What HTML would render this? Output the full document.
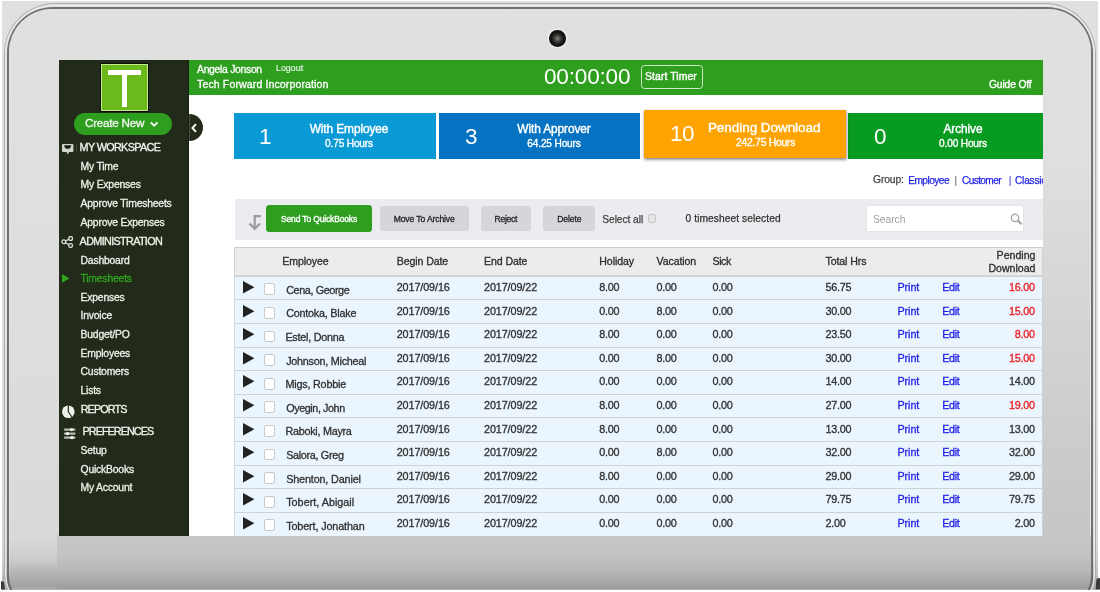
<!DOCTYPE html>
<html><head><meta charset="utf-8"><title>Timesheets</title><style>
html,body{margin:0;padding:0;}
body{width:1100px;height:592px;position:relative;overflow:hidden;background:#fff;font-family:"Liberation Sans", sans-serif;}
#wrap{position:absolute;left:0;top:0;width:1100px;height:592px;will-change:transform;}
.t{position:absolute;white-space:nowrap;line-height:1;font-family:"Liberation Sans", sans-serif;}
</style></head><body><div id="wrap">
<div style='position:absolute;left:2px;top:1px;width:1096.00px;height:589.00px;background:linear-gradient(#e0e0e0 0px,#dedede 300px,#d9d9d9 540px,#cfcfcf 560px,#b8b8b8 582px,#acacac 587px,#c4c4c4 589px)'></div>
<div style='position:absolute;left:1043px;top:60px;width:47.70px;height:475.00px;background:linear-gradient(rgba(198,198,198,0) 0px,rgba(198,198,198,0) 100px,rgba(200,200,200,0.55) 300px,rgba(198,198,198,1) 475px)'></div>
<div style='position:absolute;left:1097.6px;top:498px;width:2.40px;height:82.00px;background:#fff'></div>
<div style='position:absolute;left:3.6px;top:2.8px;width:1092.8px;height:574px;border:1.8px solid #acacac;border-radius:51px 51px 0 0;box-sizing:border-box;border-bottom:none'></div>
<div style='position:absolute;left:5.4px;top:4.6px;width:1089.2px;height:571px;border:1.6px solid #ececec;border-radius:49px 49px 0 0;box-sizing:border-box;border-bottom:none'></div>
<div style='position:absolute;left:6.6px;top:6.6px;width:1086.8px;height:569.5px;border:2.7px solid #727272;border-radius:46px 46px 0 0;box-sizing:border-box;border-bottom:none'></div>
<div style='position:absolute;left:9.3px;top:9.3px;width:1081.4px;height:566.7px;border:1.2px solid #e2e2e2;border-radius:43px 43px 0 0;box-sizing:border-box;border-bottom:none'></div>
<div style='position:absolute;left:57px;top:535px;width:1033.70px;height:55.00px;background:linear-gradient(#c6c6c6 0px,#c3c3c3 20px,#b7b7b7 36px,#a6a6a6 48px,#9c9c9c 53px,#b4b4b4 55px)'></div>
<div style='position:absolute;left:8.6px;top:535px;width:48.40px;height:55.00px;background:linear-gradient(rgba(215,215,215,0) 0px,rgba(200,200,200,0.5) 25px,rgba(160,160,160,0.95) 52px,rgba(180,180,180,0.9) 55px)'></div>
<svg style='position:absolute;left:0;top:570px' width='30' height='22' viewBox='0 0 30 22'><path d='M3.8 6.5 C3.8 13 5 17 7 20' stroke='#b3b3b3' stroke-width='2.2' fill='none'/><path d='M6.1 6 C6.1 12 7.2 16 9.2 20' stroke='#e4e4e4' stroke-width='1.4' fill='none'/><path d='M7.95 5.5 C7.95 12 9 16.5 11.5 20' stroke='#6a6a6a' stroke-width='2.2' fill='none'/><path d='M1 11 L4 12 L5 19.6 L1 19.6Z' fill='#3a3a3a'/></svg>
<svg style='position:absolute;left:1070px;top:570px' width='30' height='22' viewBox='0 0 30 22'><path d='M26.2 6.5 C26.2 13 25 17 23 20' stroke='#b3b3b3' stroke-width='2.2' fill='none'/><path d='M23.9 6 C23.9 12 22.8 16 20.8 20' stroke='#e4e4e4' stroke-width='1.4' fill='none'/><path d='M22.05 5.5 C22.05 12 21 16.5 18.5 20' stroke='#6a6a6a' stroke-width='2.2' fill='none'/><path d='M29 8 L26.5 9 L25.5 19.6 L30 19.6 L30 8Z' fill='#3a3a3a'/></svg>
<div style='position:absolute;left:0px;top:589.5px;width:1100.00px;height:2.50px;background:#fff'></div>
<div style='position:absolute;left:549.3px;top:30.4px;width:16.4px;height:16.4px;border-radius:50%;background:radial-gradient(circle at 50% 50%,#85857c 0%,#3c3c38 28%,#141414 52%,#0e0e0e 100%);box-shadow:0 0 0 1.5px #f0f0f0'></div>
<div style='position:absolute;left:59px;top:60px;width:984.00px;height:475.50px;background:#fff'></div>
<div style='position:absolute;left:59px;top:60px;width:130.00px;height:475.50px;background:#222a19'></div>
<div style='position:absolute;left:187.8px;top:60px;width:1.20px;height:475.50px;background:#171d10'></div>
<div style='position:absolute;left:189px;top:60px;width:854.00px;height:35.00px;background:#2e9e1f'></div>
<div class=t style='left:197px;top:65.16px;font-size:10.4px;color:#ffffff;letter-spacing:-0.3px;-webkit-text-stroke:0.3px #ffffff;'>Angela Jonson</div>
<div class=t style='left:276px;top:63.64px;font-size:8.9px;color:#ffffff;-webkit-text-stroke:0.15px #ffffff;opacity:.9;'>Logout</div>
<div class=t style='left:197px;top:78.69px;font-size:10.6px;color:#ffffff;letter-spacing:0.1px;-webkit-text-stroke:0.3px #ffffff;'>Tech Forward Incorporation</div>
<div class=t style='left:544px;top:65.79px;font-size:22.6px;color:#ffffff;letter-spacing:-0.2px;'>00:00:00</div>
<div style='position:absolute;left:640.5px;top:64.6px;width:62.2px;height:24.4px;border:1px solid #cfe9c8;border-radius:3.5px;box-sizing:border-box'></div>
<div class=t style='left:645px;top:72.16px;font-size:10.4px;color:#ffffff;letter-spacing:0.1px;-webkit-text-stroke:0.4px #ffffff;'>Start Timer</div>
<div class=t style='left:989px;top:80.05px;font-size:10.3px;color:#ffffff;letter-spacing:-0.15px;-webkit-text-stroke:0.35px #ffffff;'>Guide Off</div>
<div style='position:absolute;left:234px;top:113px;width:202.00px;height:46.00px;background:#0a9ad6'></div>
<div class=t style='left:259px;top:126.07px;font-size:22.5px;color:#ffffff;'>1</div>
<div class=t style='left:49px;width:600px;text-align:center;top:123.58px;font-size:11.9px;color:#ffffff;letter-spacing:-0.1px;-webkit-text-stroke:0.4px #ffffff;'>With Employee</div>
<div class=t style='left:49px;width:600px;text-align:center;top:139.01px;font-size:10.1px;color:#ffffff;letter-spacing:-0.15px;-webkit-text-stroke:0.35px #ffffff;'>0.75 Hours</div>
<div style='position:absolute;left:439px;top:113px;width:201.00px;height:46.00px;background:#0573c2'></div>
<div class=t style='left:465px;top:126.07px;font-size:22.5px;color:#ffffff;'>3</div>
<div class=t style='left:254px;width:600px;text-align:center;top:123.58px;font-size:11.9px;color:#ffffff;letter-spacing:-0.1px;-webkit-text-stroke:0.4px #ffffff;'>With Approver</div>
<div class=t style='left:254px;width:600px;text-align:center;top:139.01px;font-size:10.1px;color:#ffffff;letter-spacing:-0.15px;-webkit-text-stroke:0.35px #ffffff;'>64.25 Hours</div>
<div style='position:absolute;left:848px;top:113px;width:195.00px;height:46.00px;background:#079b22'></div>
<div class=t style='left:874px;top:126.07px;font-size:22.5px;color:#ffffff;'>0</div>
<div class=t style='left:663px;width:600px;text-align:center;top:123.58px;font-size:11.9px;color:#ffffff;letter-spacing:-0.1px;-webkit-text-stroke:0.4px #ffffff;'>Archive</div>
<div class=t style='left:663px;width:600px;text-align:center;top:139.01px;font-size:10.1px;color:#ffffff;letter-spacing:-0.15px;-webkit-text-stroke:0.35px #ffffff;'>0.00 Hours</div>
<div style='position:absolute;left:643.5px;top:110px;width:202.50px;height:48.30px;background:#ffa300;box-shadow:0 1px 3px 0.5px rgba(0,0,0,0.55)'></div>
<div class=t style='left:670px;top:122.68px;font-size:22.5px;color:#ffffff;letter-spacing:-0.6px;'>10</div>
<div class=t style='left:464.20000000000005px;width:600px;text-align:center;top:121.43px;font-size:13.5px;color:#ffffff;letter-spacing:-0.05px;-webkit-text-stroke:0.4px #ffffff;'>Pending Download</div>
<div class=t style='left:465.6px;width:600px;text-align:center;top:138.46px;font-size:10.4px;color:#ffffff;letter-spacing:-0.25px;-webkit-text-stroke:0.35px #ffffff;'>242.75 Hours</div>
<div style='position:absolute;left:99.6px;top:62.6px;width:49.10px;height:49.10px;background:#0b0c06'></div>
<div style='position:absolute;left:100.6px;top:63.6px;width:47.10px;height:47.10px;background:#c2ea8e'></div>
<div style='position:absolute;left:101.6px;top:64.6px;width:45.10px;height:45.10px;background:#6cb91b'></div>
<div style='position:absolute;left:108.2px;top:70.4px;width:33.20px;height:4.30px;background:#fff'></div>
<div style='position:absolute;left:121.5px;top:70.4px;width:5.70px;height:36.20px;background:#fff'></div>
<div style='position:absolute;left:73.75px;top:112.5px;width:98.25px;height:22.5px;border-radius:11.25px;background:#2e9e1f'></div>
<div class=t style='left:85px;top:117.06px;font-size:11.7px;color:#f4f8f2;letter-spacing:-0.25px;-webkit-text-stroke:0.3px #f4f8f2;'>Create New</div>
<svg style='position:absolute;left:149px;top:120px' width='11' height='9' viewBox='0 0 11 9'><path d='M1.8 2.3 L5.2 5.7 L8.6 2.3' stroke='#f4f8f2' stroke-width='1.9' fill='none'/></svg>
<div style='position:absolute;left:189px;top:114.3px;width:13.5px;height:27px;border-radius:0 13.5px 13.5px 0;background:#222a19'></div>
<div style='position:absolute;left:188.6px;top:114.3px;width:1.00px;height:27.00px;background:#4d5246'></div>
<svg style='position:absolute;left:190px;top:122px' width='9' height='12' viewBox='0 0 9 12'><path d='M6 2.2 L2.4 6 L6 9.8' stroke='#fff' stroke-width='1.9' fill='none'/></svg>
<div class=t style='left:79.6px;top:142.32px;font-size:10.8px;color:#eef0ea;letter-spacing:-0.65px;-webkit-text-stroke:0.35px #eef0ea;'>MY WORKSPACE</div>
<div class=t style='left:80.5px;top:161.66px;font-size:10.4px;color:#eef0ea;letter-spacing:-0.2px;-webkit-text-stroke:0.3px #eef0ea;'>My Time</div>
<div class=t style='left:80.5px;top:180.46px;font-size:10.4px;color:#eef0ea;letter-spacing:-0.2px;-webkit-text-stroke:0.3px #eef0ea;'>My Expenses</div>
<div class=t style='left:80.5px;top:198.96px;font-size:10.4px;color:#eef0ea;letter-spacing:-0.2px;-webkit-text-stroke:0.3px #eef0ea;'>Approve Timesheets</div>
<div class=t style='left:80.5px;top:217.56px;font-size:10.4px;color:#eef0ea;letter-spacing:-0.2px;-webkit-text-stroke:0.3px #eef0ea;'>Approve Expenses</div>
<div class=t style='left:79.6px;top:235.92px;font-size:10.8px;color:#eef0ea;letter-spacing:-0.65px;-webkit-text-stroke:0.35px #eef0ea;'>ADMINISTRATION</div>
<div class=t style='left:80.5px;top:255.66px;font-size:10.4px;color:#eef0ea;letter-spacing:-0.2px;-webkit-text-stroke:0.3px #eef0ea;'>Dashboard</div>
<div class=t style='left:80.5px;top:274.36px;font-size:10.4px;color:#2fa51f;letter-spacing:-0.2px;-webkit-text-stroke:0.3px #2fa51f;'>Timesheets</div>
<div class=t style='left:80.5px;top:292.56px;font-size:10.4px;color:#eef0ea;letter-spacing:-0.2px;-webkit-text-stroke:0.3px #eef0ea;'>Expenses</div>
<div class=t style='left:80.5px;top:311.16px;font-size:10.4px;color:#eef0ea;letter-spacing:-0.2px;-webkit-text-stroke:0.3px #eef0ea;'>Invoice</div>
<div class=t style='left:80.5px;top:329.96px;font-size:10.4px;color:#eef0ea;letter-spacing:-0.2px;-webkit-text-stroke:0.3px #eef0ea;'>Budget/PO</div>
<div class=t style='left:80.5px;top:348.66px;font-size:10.4px;color:#eef0ea;letter-spacing:-0.2px;-webkit-text-stroke:0.3px #eef0ea;'>Employees</div>
<div class=t style='left:80.5px;top:367.46px;font-size:10.4px;color:#eef0ea;letter-spacing:-0.2px;-webkit-text-stroke:0.3px #eef0ea;'>Customers</div>
<div class=t style='left:80.5px;top:386.16px;font-size:10.4px;color:#eef0ea;letter-spacing:-0.2px;-webkit-text-stroke:0.3px #eef0ea;'>Lists</div>
<div class=t style='left:80.7px;top:403.92px;font-size:10.8px;color:#eef0ea;letter-spacing:-0.87px;-webkit-text-stroke:0.35px #eef0ea;'>REPORTS</div>
<div class=t style='left:82.5px;top:426.02px;font-size:10.8px;color:#eef0ea;letter-spacing:-0.93px;-webkit-text-stroke:0.35px #eef0ea;'>PREFERENCES</div>
<div class=t style='left:80.5px;top:445.96px;font-size:10.4px;color:#eef0ea;letter-spacing:-0.2px;-webkit-text-stroke:0.3px #eef0ea;'>Setup</div>
<div class=t style='left:80.5px;top:464.56px;font-size:10.4px;color:#eef0ea;letter-spacing:-0.2px;-webkit-text-stroke:0.3px #eef0ea;'>QuickBooks</div>
<div class=t style='left:80.5px;top:483.16px;font-size:10.4px;color:#eef0ea;letter-spacing:-0.2px;-webkit-text-stroke:0.3px #eef0ea;'>My Account</div>
<svg style='position:absolute;left:62px;top:273.5px' width='8' height='9' viewBox='0 0 8 9'><path d='M0 0 L7.5 4.4 L0 8.8Z' fill='#2fa51f'/></svg>
<svg style='position:absolute;left:61px;top:143px' width='18' height='12' viewBox='0 0 18 12'><rect x='1' y='1' width='11.4' height='7.9' rx='1' fill='#d2d4ce'/><path d='M3 2.3 H10.4 L9.2 5.2 Q6.7 6.4 4.2 5.2Z' fill='#1a2012'/><rect x='5.9' y='8.8' width='1.8' height='1.9' fill='#d2d4ce'/><rect x='15' y='1.6' width='0.8' height='7.3' fill='#4a5043'/></svg>
<svg style='position:absolute;left:61px;top:236px' width='13' height='12' viewBox='0 0 13 12'><circle cx='2.8' cy='5.8' r='1.9' fill='none' stroke='#dcdfd8' stroke-width='1.3'/><circle cx='9.6' cy='2.4' r='1.9' fill='none' stroke='#dcdfd8' stroke-width='1.3'/><circle cx='9.6' cy='9.5' r='1.9' fill='none' stroke='#dcdfd8' stroke-width='1.3'/><path d='M4.5 4.9 L7.9 3.3 M4.5 6.8 L7.9 8.6' stroke='#dcdfd8' stroke-width='1.2'/></svg>
<svg style='position:absolute;left:62px;top:404.6px' width='13' height='14' viewBox='0 0 13 14'><circle cx='6.3' cy='6.75' r='6.3' fill='#eef0ea'/><path d='M6.3 6.75 L6.3 0.2 M6.3 6.75 L9.9 12' stroke='#222a19' stroke-width='1.2'/></svg>
<svg style='position:absolute;left:62.5px;top:426.5px' width='18' height='13' viewBox='0 0 18 13'><g fill='#b9bcb4'><rect x='0.8' y='1.4' width='11.8' height='2.3' rx='1.1'/><rect x='0.8' y='5.4' width='11.8' height='2.3' rx='1.1'/><rect x='0.8' y='9.4' width='11.8' height='2.3' rx='1.1'/></g><g fill='#f4f4f0'><ellipse cx='8.6' cy='2.55' rx='1.7' ry='1.6'/><ellipse cx='4.5' cy='6.55' rx='1.7' ry='1.6'/><ellipse cx='9' cy='10.55' rx='1.7' ry='1.6'/></g><g fill='#4a5043'><rect x='16' y='2' width='1' height='1'/><rect x='16' y='6' width='1' height='1'/><rect x='16' y='10' width='1' height='1'/></g></svg>
<div class=t style='left:873px;top:175.44px;font-size:10.3px;color:#444;letter-spacing:-0.1px;-webkit-text-stroke:0.25px #444;'>Group:</div>
<div class=t style='left:908.2px;top:175.61px;font-size:10.1px;color:#1f1fe4;letter-spacing:-0.5px;-webkit-text-stroke:0.25px #1f1fe4;'>Employee</div>
<div class=t style='left:954.6px;top:176.05px;font-size:10.3px;color:#555;'>|</div>
<div class=t style='left:962px;top:175.61px;font-size:10.1px;color:#1f1fe4;letter-spacing:-0.6px;-webkit-text-stroke:0.25px #1f1fe4;'>Customer</div>
<div class=t style='left:1008.7px;top:176.05px;font-size:10.3px;color:#1f1fe4;'>|</div>
<div class=t style='left:1015px;top:175.61px;font-size:10.1px;color:#1f1fe4;letter-spacing:-0.2px;-webkit-text-stroke:0.25px #1f1fe4;width:28px;overflow:hidden;'>Classic</div>
<div style='position:absolute;left:234.5px;top:199px;width:808.50px;height:40.50px;background:#ebecef'></div>
<svg style='position:absolute;left:248px;top:213.5px' width='15' height='16' viewBox='0 0 15 16'><path d='M12.8 2.1 H6.7 V14' fill='none' stroke='#9b9b9b' stroke-width='2.2'/><path d='M1.4 9.4 L6.7 14.8 L12 9.4' fill='none' stroke='#9b9b9b' stroke-width='2.2'/></svg>
<div style='position:absolute;left:265.7px;top:204.5px;width:106.2px;height:27.7px;border-radius:3.5px;background:#2e9e1f'></div>
<div class=t style='left:281px;top:214.78px;font-size:8.5px;color:#fff;letter-spacing:-0.15px;-webkit-text-stroke:0.35px #fff;'>Send To QuickBooks</div>
<div style='position:absolute;left:379.5px;top:205.9px;width:89.4px;height:25px;border-radius:3px;background:#d4d6da'></div>
<div class=t style='left:393.7px;top:214.59px;font-size:8.6px;color:#262626;letter-spacing:-0.13px;-webkit-text-stroke:0.3px #262626;'>Move To Archive</div>
<div style='position:absolute;left:480.7px;top:205.9px;width:49.9px;height:25px;border-radius:3px;background:#d4d6da'></div>
<div class=t style='left:494.6px;top:214.59px;font-size:8.6px;color:#262626;letter-spacing:-0.3px;-webkit-text-stroke:0.3px #262626;'>Reject</div>
<div style='position:absolute;left:543.3px;top:205.9px;width:51.9px;height:25px;border-radius:3px;background:#d4d6da'></div>
<div class=t style='left:557.2px;top:214.59px;font-size:8.6px;color:#262626;letter-spacing:-0.1px;-webkit-text-stroke:0.3px #262626;'>Delete</div>
<div class=t style='left:602.3px;top:214.93px;font-size:10.2px;color:#444;letter-spacing:-0.05px;-webkit-text-stroke:0.25px #444;'>Select all</div>
<div style='position:absolute;left:647.5px;top:214.2px;width:8.2px;height:8.4px;border:1px solid #c4c4c4;border-radius:2.2px;background:#e4e4e4;box-sizing:border-box'></div>
<div class=t style='left:685.6px;top:213.63px;font-size:10.2px;color:#333;letter-spacing:0.08px;-webkit-text-stroke:0.25px #333;'>0 timesheet selected</div>
<div style='position:absolute;left:865.8px;top:205.3px;width:158.20px;height:27.20px;background:#fff;border:1px solid #e2e3e6;box-sizing:border-box;border-radius:1.5px'></div>
<div class=t style='left:873px;top:214.75px;font-size:10.3px;color:#a0a0a0;letter-spacing:-0.05px;'>Search</div>
<svg style='position:absolute;left:1010px;top:212.5px' width='14' height='13' viewBox='0 0 14 13'><circle cx='5' cy='4.9' r='3.7' fill='none' stroke='#a3a3a3' stroke-width='1.2'/><path d='M7.7 7.5 L11.6 11.2' stroke='#a3a3a3' stroke-width='2.2'/></svg>
<div style='position:absolute;left:234.3px;top:247.3px;width:808.70px;height:29.20px;background:#ececec;border-top:1px solid #cdcdcd;border-left:1px solid #d0d0d0;box-sizing:border-box'></div>
<div style='position:absolute;left:234.3px;top:275.3px;width:808.70px;height:1.30px;background:#d4d4d4'></div>
<div class=t style='left:282.2px;top:255.99px;font-size:10.6px;color:#2e2e2e;letter-spacing:-0.1px;-webkit-text-stroke:0.3px #2e2e2e;'>Employee</div>
<div class=t style='left:396.7px;top:255.99px;font-size:10.6px;color:#2e2e2e;letter-spacing:-0.1px;-webkit-text-stroke:0.3px #2e2e2e;'>Begin Date</div>
<div class=t style='left:484px;top:255.99px;font-size:10.6px;color:#2e2e2e;letter-spacing:-0.1px;-webkit-text-stroke:0.3px #2e2e2e;'>End Date</div>
<div class=t style='left:599.3px;top:255.99px;font-size:10.6px;color:#2e2e2e;letter-spacing:-0.1px;-webkit-text-stroke:0.3px #2e2e2e;'>Holiday</div>
<div class=t style='left:656.5px;top:255.99px;font-size:10.6px;color:#2e2e2e;letter-spacing:-0.1px;-webkit-text-stroke:0.3px #2e2e2e;'>Vacation</div>
<div class=t style='left:712.5px;top:255.99px;font-size:10.6px;color:#2e2e2e;letter-spacing:-0.4px;-webkit-text-stroke:0.3px #2e2e2e;'>Sick</div>
<div class=t style='left:825.5px;top:255.99px;font-size:10.6px;color:#2e2e2e;letter-spacing:-0.1px;-webkit-text-stroke:0.3px #2e2e2e;'>Total Hrs</div>
<div class=t style='right:64.5px;top:249.69px;font-size:10.6px;color:#2e2e2e;-webkit-text-stroke:0.3px #2e2e2e;'>Pending</div>
<div class=t style='right:64.5px;top:263.19px;font-size:10.6px;color:#2e2e2e;-webkit-text-stroke:0.3px #2e2e2e;'>Download</div>
<div style='position:absolute;left:234.3px;top:277.0px;width:808.70px;height:23.60px;background:#eaf5fd;border-left:1px solid #d6dde2;box-sizing:border-box'></div>
<div style='position:absolute;left:234.3px;top:299px;width:808.70px;height:1.00px;background:#d0d3d5'></div>
<svg style='position:absolute;left:243.2px;top:281.00px' width='12' height='13' viewBox='0 0 12 13'><path d='M0 0 L11.4 6.25 L0 12.5Z' fill='#222'/></svg>
<div style='position:absolute;left:264.4px;top:283.40px;width:11px;height:11.8px;border:1px solid #c8c8c8;border-radius:2px;background:#fff;box-sizing:border-box'></div>
<div class=t style='left:286.2px;top:284.72px;font-size:10.8px;color:#303030;letter-spacing:-0.39px;-webkit-text-stroke:0.3px #303030;'>Cena, George</div>
<div class=t style='left:396.7px;top:282.02px;font-size:10.8px;color:#303030;letter-spacing:-0.1px;-webkit-text-stroke:0.3px #303030;'>2017/09/16</div>
<div class=t style='left:484px;top:282.02px;font-size:10.8px;color:#303030;letter-spacing:-0.1px;-webkit-text-stroke:0.3px #303030;'>2017/09/22</div>
<div class=t style='left:599.3px;top:282.02px;font-size:10.8px;color:#303030;letter-spacing:-0.25px;-webkit-text-stroke:0.3px #303030;'>8.00</div>
<div class=t style='left:656.5px;top:282.02px;font-size:10.8px;color:#303030;letter-spacing:-0.25px;-webkit-text-stroke:0.3px #303030;'>0.00</div>
<div class=t style='left:712.6px;top:282.02px;font-size:10.8px;color:#303030;letter-spacing:-0.25px;-webkit-text-stroke:0.3px #303030;'>0.00</div>
<div class=t style='left:825.5px;top:282.02px;font-size:10.8px;color:#303030;letter-spacing:-0.25px;-webkit-text-stroke:0.3px #303030;'>56.75</div>
<div class=t style='left:897.5px;top:282.02px;font-size:10.8px;color:#1f1fe4;letter-spacing:-0.1px;-webkit-text-stroke:0.3px #1f1fe4;'>Print</div>
<div class=t style='left:942.2px;top:282.02px;font-size:10.8px;color:#1f1fe4;letter-spacing:-0.35px;-webkit-text-stroke:0.3px #1f1fe4;'>Edit</div>
<div class=t style='right:65.20000000000005px;top:282.02px;font-size:10.8px;color:#ec1a1f;letter-spacing:-0.25px;-webkit-text-stroke:0.3px #ec1a1f;'>16.00</div>
<div style='position:absolute;left:234.3px;top:300.6px;width:808.70px;height:23.60px;background:#eaf5fd;border-left:1px solid #d6dde2;box-sizing:border-box'></div>
<div style='position:absolute;left:234.3px;top:323px;width:808.70px;height:1.00px;background:#d0d3d5'></div>
<svg style='position:absolute;left:243.2px;top:304.60px' width='12' height='13' viewBox='0 0 12 13'><path d='M0 0 L11.4 6.25 L0 12.5Z' fill='#222'/></svg>
<div style='position:absolute;left:264.4px;top:307.00px;width:11px;height:11.8px;border:1px solid #c8c8c8;border-radius:2px;background:#fff;box-sizing:border-box'></div>
<div class=t style='left:286.2px;top:308.32px;font-size:10.8px;color:#303030;letter-spacing:-0.23px;-webkit-text-stroke:0.3px #303030;'>Contoka, Blake</div>
<div class=t style='left:396.7px;top:305.62px;font-size:10.8px;color:#303030;letter-spacing:-0.1px;-webkit-text-stroke:0.3px #303030;'>2017/09/16</div>
<div class=t style='left:484px;top:305.62px;font-size:10.8px;color:#303030;letter-spacing:-0.1px;-webkit-text-stroke:0.3px #303030;'>2017/09/22</div>
<div class=t style='left:599.3px;top:305.62px;font-size:10.8px;color:#303030;letter-spacing:-0.25px;-webkit-text-stroke:0.3px #303030;'>0.00</div>
<div class=t style='left:656.5px;top:305.62px;font-size:10.8px;color:#303030;letter-spacing:-0.25px;-webkit-text-stroke:0.3px #303030;'>8.00</div>
<div class=t style='left:712.6px;top:305.62px;font-size:10.8px;color:#303030;letter-spacing:-0.25px;-webkit-text-stroke:0.3px #303030;'>0.00</div>
<div class=t style='left:825.5px;top:305.62px;font-size:10.8px;color:#303030;letter-spacing:-0.25px;-webkit-text-stroke:0.3px #303030;'>30.00</div>
<div class=t style='left:897.5px;top:305.62px;font-size:10.8px;color:#1f1fe4;letter-spacing:-0.1px;-webkit-text-stroke:0.3px #1f1fe4;'>Print</div>
<div class=t style='left:942.2px;top:305.62px;font-size:10.8px;color:#1f1fe4;letter-spacing:-0.35px;-webkit-text-stroke:0.3px #1f1fe4;'>Edit</div>
<div class=t style='right:65.20000000000005px;top:305.62px;font-size:10.8px;color:#ec1a1f;letter-spacing:-0.25px;-webkit-text-stroke:0.3px #ec1a1f;'>15.00</div>
<div style='position:absolute;left:234.3px;top:324.2px;width:808.70px;height:23.60px;background:#eaf5fd;border-left:1px solid #d6dde2;box-sizing:border-box'></div>
<div style='position:absolute;left:234.3px;top:347px;width:808.70px;height:1.00px;background:#d0d3d5'></div>
<svg style='position:absolute;left:243.2px;top:328.20px' width='12' height='13' viewBox='0 0 12 13'><path d='M0 0 L11.4 6.25 L0 12.5Z' fill='#222'/></svg>
<div style='position:absolute;left:264.4px;top:330.60px;width:11px;height:11.8px;border:1px solid #c8c8c8;border-radius:2px;background:#fff;box-sizing:border-box'></div>
<div class=t style='left:285.4px;top:331.92px;font-size:10.8px;color:#303030;letter-spacing:-0.24px;-webkit-text-stroke:0.3px #303030;'>Estel, Donna</div>
<div class=t style='left:396.7px;top:329.22px;font-size:10.8px;color:#303030;letter-spacing:-0.1px;-webkit-text-stroke:0.3px #303030;'>2017/09/16</div>
<div class=t style='left:484px;top:329.22px;font-size:10.8px;color:#303030;letter-spacing:-0.1px;-webkit-text-stroke:0.3px #303030;'>2017/09/22</div>
<div class=t style='left:599.3px;top:329.22px;font-size:10.8px;color:#303030;letter-spacing:-0.25px;-webkit-text-stroke:0.3px #303030;'>8.00</div>
<div class=t style='left:656.5px;top:329.22px;font-size:10.8px;color:#303030;letter-spacing:-0.25px;-webkit-text-stroke:0.3px #303030;'>0.00</div>
<div class=t style='left:712.6px;top:329.22px;font-size:10.8px;color:#303030;letter-spacing:-0.25px;-webkit-text-stroke:0.3px #303030;'>0.00</div>
<div class=t style='left:825.5px;top:329.22px;font-size:10.8px;color:#303030;letter-spacing:-0.25px;-webkit-text-stroke:0.3px #303030;'>23.50</div>
<div class=t style='left:897.5px;top:329.22px;font-size:10.8px;color:#1f1fe4;letter-spacing:-0.1px;-webkit-text-stroke:0.3px #1f1fe4;'>Print</div>
<div class=t style='left:942.2px;top:329.22px;font-size:10.8px;color:#1f1fe4;letter-spacing:-0.35px;-webkit-text-stroke:0.3px #1f1fe4;'>Edit</div>
<div class=t style='right:65.20000000000005px;top:329.22px;font-size:10.8px;color:#ec1a1f;letter-spacing:-0.25px;-webkit-text-stroke:0.3px #ec1a1f;'>8.00</div>
<div style='position:absolute;left:234.3px;top:347.8px;width:808.70px;height:23.60px;background:#eaf5fd;border-left:1px solid #d6dde2;box-sizing:border-box'></div>
<div style='position:absolute;left:234.3px;top:370px;width:808.70px;height:1.00px;background:#d0d3d5'></div>
<svg style='position:absolute;left:243.2px;top:351.80px' width='12' height='13' viewBox='0 0 12 13'><path d='M0 0 L11.4 6.25 L0 12.5Z' fill='#222'/></svg>
<div style='position:absolute;left:264.4px;top:354.20px;width:11px;height:11.8px;border:1px solid #c8c8c8;border-radius:2px;background:#fff;box-sizing:border-box'></div>
<div class=t style='left:286.2px;top:355.52px;font-size:10.8px;color:#303030;letter-spacing:-0.25px;-webkit-text-stroke:0.3px #303030;'>Johnson, Micheal</div>
<div class=t style='left:396.7px;top:352.82px;font-size:10.8px;color:#303030;letter-spacing:-0.1px;-webkit-text-stroke:0.3px #303030;'>2017/09/16</div>
<div class=t style='left:484px;top:352.82px;font-size:10.8px;color:#303030;letter-spacing:-0.1px;-webkit-text-stroke:0.3px #303030;'>2017/09/22</div>
<div class=t style='left:599.3px;top:352.82px;font-size:10.8px;color:#303030;letter-spacing:-0.25px;-webkit-text-stroke:0.3px #303030;'>0.00</div>
<div class=t style='left:656.5px;top:352.82px;font-size:10.8px;color:#303030;letter-spacing:-0.25px;-webkit-text-stroke:0.3px #303030;'>8.00</div>
<div class=t style='left:712.6px;top:352.82px;font-size:10.8px;color:#303030;letter-spacing:-0.25px;-webkit-text-stroke:0.3px #303030;'>0.00</div>
<div class=t style='left:825.5px;top:352.82px;font-size:10.8px;color:#303030;letter-spacing:-0.25px;-webkit-text-stroke:0.3px #303030;'>30.00</div>
<div class=t style='left:897.5px;top:352.82px;font-size:10.8px;color:#1f1fe4;letter-spacing:-0.1px;-webkit-text-stroke:0.3px #1f1fe4;'>Print</div>
<div class=t style='left:942.2px;top:352.82px;font-size:10.8px;color:#1f1fe4;letter-spacing:-0.35px;-webkit-text-stroke:0.3px #1f1fe4;'>Edit</div>
<div class=t style='right:65.20000000000005px;top:352.82px;font-size:10.8px;color:#ec1a1f;letter-spacing:-0.25px;-webkit-text-stroke:0.3px #ec1a1f;'>15.00</div>
<div style='position:absolute;left:234.3px;top:371.4px;width:808.70px;height:23.60px;background:#eaf5fd;border-left:1px solid #d6dde2;box-sizing:border-box'></div>
<div style='position:absolute;left:234.3px;top:394px;width:808.70px;height:1.00px;background:#d0d3d5'></div>
<svg style='position:absolute;left:243.2px;top:375.40px' width='12' height='13' viewBox='0 0 12 13'><path d='M0 0 L11.4 6.25 L0 12.5Z' fill='#222'/></svg>
<div style='position:absolute;left:264.4px;top:377.80px;width:11px;height:11.8px;border:1px solid #c8c8c8;border-radius:2px;background:#fff;box-sizing:border-box'></div>
<div class=t style='left:285.4px;top:379.12px;font-size:10.8px;color:#303030;letter-spacing:-0.2px;-webkit-text-stroke:0.3px #303030;'>Migs, Robbie</div>
<div class=t style='left:396.7px;top:376.42px;font-size:10.8px;color:#303030;letter-spacing:-0.1px;-webkit-text-stroke:0.3px #303030;'>2017/09/16</div>
<div class=t style='left:484px;top:376.42px;font-size:10.8px;color:#303030;letter-spacing:-0.1px;-webkit-text-stroke:0.3px #303030;'>2017/09/22</div>
<div class=t style='left:599.3px;top:376.42px;font-size:10.8px;color:#303030;letter-spacing:-0.25px;-webkit-text-stroke:0.3px #303030;'>0.00</div>
<div class=t style='left:656.5px;top:376.42px;font-size:10.8px;color:#303030;letter-spacing:-0.25px;-webkit-text-stroke:0.3px #303030;'>0.00</div>
<div class=t style='left:712.6px;top:376.42px;font-size:10.8px;color:#303030;letter-spacing:-0.25px;-webkit-text-stroke:0.3px #303030;'>0.00</div>
<div class=t style='left:825.5px;top:376.42px;font-size:10.8px;color:#303030;letter-spacing:-0.25px;-webkit-text-stroke:0.3px #303030;'>14.00</div>
<div class=t style='left:897.5px;top:376.42px;font-size:10.8px;color:#1f1fe4;letter-spacing:-0.1px;-webkit-text-stroke:0.3px #1f1fe4;'>Print</div>
<div class=t style='left:942.2px;top:376.42px;font-size:10.8px;color:#1f1fe4;letter-spacing:-0.35px;-webkit-text-stroke:0.3px #1f1fe4;'>Edit</div>
<div class=t style='right:65.20000000000005px;top:376.42px;font-size:10.8px;color:#303030;letter-spacing:-0.25px;-webkit-text-stroke:0.3px #303030;'>14.00</div>
<div style='position:absolute;left:234.3px;top:395.0px;width:808.70px;height:23.60px;background:#eaf5fd;border-left:1px solid #d6dde2;box-sizing:border-box'></div>
<div style='position:absolute;left:234.3px;top:417px;width:808.70px;height:1.00px;background:#d0d3d5'></div>
<svg style='position:absolute;left:243.2px;top:399.00px' width='12' height='13' viewBox='0 0 12 13'><path d='M0 0 L11.4 6.25 L0 12.5Z' fill='#222'/></svg>
<div style='position:absolute;left:264.4px;top:401.40px;width:11px;height:11.8px;border:1px solid #c8c8c8;border-radius:2px;background:#fff;box-sizing:border-box'></div>
<div class=t style='left:286.2px;top:402.72px;font-size:10.8px;color:#303030;letter-spacing:-0.42px;-webkit-text-stroke:0.3px #303030;'>Oyegin, John</div>
<div class=t style='left:396.7px;top:400.02px;font-size:10.8px;color:#303030;letter-spacing:-0.1px;-webkit-text-stroke:0.3px #303030;'>2017/09/16</div>
<div class=t style='left:484px;top:400.02px;font-size:10.8px;color:#303030;letter-spacing:-0.1px;-webkit-text-stroke:0.3px #303030;'>2017/09/22</div>
<div class=t style='left:599.3px;top:400.02px;font-size:10.8px;color:#303030;letter-spacing:-0.25px;-webkit-text-stroke:0.3px #303030;'>8.00</div>
<div class=t style='left:656.5px;top:400.02px;font-size:10.8px;color:#303030;letter-spacing:-0.25px;-webkit-text-stroke:0.3px #303030;'>0.00</div>
<div class=t style='left:712.6px;top:400.02px;font-size:10.8px;color:#303030;letter-spacing:-0.25px;-webkit-text-stroke:0.3px #303030;'>0.00</div>
<div class=t style='left:825.5px;top:400.02px;font-size:10.8px;color:#303030;letter-spacing:-0.25px;-webkit-text-stroke:0.3px #303030;'>27.00</div>
<div class=t style='left:897.5px;top:400.02px;font-size:10.8px;color:#1f1fe4;letter-spacing:-0.1px;-webkit-text-stroke:0.3px #1f1fe4;'>Print</div>
<div class=t style='left:942.2px;top:400.02px;font-size:10.8px;color:#1f1fe4;letter-spacing:-0.35px;-webkit-text-stroke:0.3px #1f1fe4;'>Edit</div>
<div class=t style='right:65.20000000000005px;top:400.02px;font-size:10.8px;color:#ec1a1f;letter-spacing:-0.25px;-webkit-text-stroke:0.3px #ec1a1f;'>19.00</div>
<div style='position:absolute;left:234.3px;top:418.6px;width:808.70px;height:23.60px;background:#eaf5fd;border-left:1px solid #d6dde2;box-sizing:border-box'></div>
<div style='position:absolute;left:234.3px;top:441px;width:808.70px;height:1.00px;background:#d0d3d5'></div>
<svg style='position:absolute;left:243.2px;top:422.60px' width='12' height='13' viewBox='0 0 12 13'><path d='M0 0 L11.4 6.25 L0 12.5Z' fill='#222'/></svg>
<div style='position:absolute;left:264.4px;top:425.00px;width:11px;height:11.8px;border:1px solid #c8c8c8;border-radius:2px;background:#fff;box-sizing:border-box'></div>
<div class=t style='left:285.4px;top:426.32px;font-size:10.8px;color:#303030;letter-spacing:-0.26px;-webkit-text-stroke:0.3px #303030;'>Raboki, Mayra</div>
<div class=t style='left:396.7px;top:423.62px;font-size:10.8px;color:#303030;letter-spacing:-0.1px;-webkit-text-stroke:0.3px #303030;'>2017/09/16</div>
<div class=t style='left:484px;top:423.62px;font-size:10.8px;color:#303030;letter-spacing:-0.1px;-webkit-text-stroke:0.3px #303030;'>2017/09/22</div>
<div class=t style='left:599.3px;top:423.62px;font-size:10.8px;color:#303030;letter-spacing:-0.25px;-webkit-text-stroke:0.3px #303030;'>8.00</div>
<div class=t style='left:656.5px;top:423.62px;font-size:10.8px;color:#303030;letter-spacing:-0.25px;-webkit-text-stroke:0.3px #303030;'>0.00</div>
<div class=t style='left:712.6px;top:423.62px;font-size:10.8px;color:#303030;letter-spacing:-0.25px;-webkit-text-stroke:0.3px #303030;'>0.00</div>
<div class=t style='left:825.5px;top:423.62px;font-size:10.8px;color:#303030;letter-spacing:-0.25px;-webkit-text-stroke:0.3px #303030;'>13.00</div>
<div class=t style='left:897.5px;top:423.62px;font-size:10.8px;color:#1f1fe4;letter-spacing:-0.1px;-webkit-text-stroke:0.3px #1f1fe4;'>Print</div>
<div class=t style='left:942.2px;top:423.62px;font-size:10.8px;color:#1f1fe4;letter-spacing:-0.35px;-webkit-text-stroke:0.3px #1f1fe4;'>Edit</div>
<div class=t style='right:65.20000000000005px;top:423.62px;font-size:10.8px;color:#303030;letter-spacing:-0.25px;-webkit-text-stroke:0.3px #303030;'>13.00</div>
<div style='position:absolute;left:234.3px;top:442.20000000000005px;width:808.70px;height:23.60px;background:#eaf5fd;border-left:1px solid #d6dde2;box-sizing:border-box'></div>
<div style='position:absolute;left:234.3px;top:465px;width:808.70px;height:1.00px;background:#d0d3d5'></div>
<svg style='position:absolute;left:243.2px;top:446.20px' width='12' height='13' viewBox='0 0 12 13'><path d='M0 0 L11.4 6.25 L0 12.5Z' fill='#222'/></svg>
<div style='position:absolute;left:264.4px;top:448.60px;width:11px;height:11.8px;border:1px solid #c8c8c8;border-radius:2px;background:#fff;box-sizing:border-box'></div>
<div class=t style='left:286.2px;top:449.92px;font-size:10.8px;color:#303030;letter-spacing:-0.32px;-webkit-text-stroke:0.3px #303030;'>Salora, Greg</div>
<div class=t style='left:396.7px;top:447.22px;font-size:10.8px;color:#303030;letter-spacing:-0.1px;-webkit-text-stroke:0.3px #303030;'>2017/09/16</div>
<div class=t style='left:484px;top:447.22px;font-size:10.8px;color:#303030;letter-spacing:-0.1px;-webkit-text-stroke:0.3px #303030;'>2017/09/22</div>
<div class=t style='left:599.3px;top:447.22px;font-size:10.8px;color:#303030;letter-spacing:-0.25px;-webkit-text-stroke:0.3px #303030;'>0.00</div>
<div class=t style='left:656.5px;top:447.22px;font-size:10.8px;color:#303030;letter-spacing:-0.25px;-webkit-text-stroke:0.3px #303030;'>8.00</div>
<div class=t style='left:712.6px;top:447.22px;font-size:10.8px;color:#303030;letter-spacing:-0.25px;-webkit-text-stroke:0.3px #303030;'>0.00</div>
<div class=t style='left:825.5px;top:447.22px;font-size:10.8px;color:#303030;letter-spacing:-0.25px;-webkit-text-stroke:0.3px #303030;'>32.00</div>
<div class=t style='left:897.5px;top:447.22px;font-size:10.8px;color:#1f1fe4;letter-spacing:-0.1px;-webkit-text-stroke:0.3px #1f1fe4;'>Print</div>
<div class=t style='left:942.2px;top:447.22px;font-size:10.8px;color:#1f1fe4;letter-spacing:-0.35px;-webkit-text-stroke:0.3px #1f1fe4;'>Edit</div>
<div class=t style='right:65.20000000000005px;top:447.22px;font-size:10.8px;color:#303030;letter-spacing:-0.25px;-webkit-text-stroke:0.3px #303030;'>32.00</div>
<div style='position:absolute;left:234.3px;top:465.8px;width:808.70px;height:23.60px;background:#eaf5fd;border-left:1px solid #d6dde2;box-sizing:border-box'></div>
<div style='position:absolute;left:234.3px;top:488px;width:808.70px;height:1.00px;background:#d0d3d5'></div>
<svg style='position:absolute;left:243.2px;top:469.80px' width='12' height='13' viewBox='0 0 12 13'><path d='M0 0 L11.4 6.25 L0 12.5Z' fill='#222'/></svg>
<div style='position:absolute;left:264.4px;top:472.20px;width:11px;height:11.8px;border:1px solid #c8c8c8;border-radius:2px;background:#fff;box-sizing:border-box'></div>
<div class=t style='left:286.2px;top:473.52px;font-size:10.8px;color:#303030;letter-spacing:-0.15px;-webkit-text-stroke:0.3px #303030;'>Shenton, Daniel</div>
<div class=t style='left:396.7px;top:470.82px;font-size:10.8px;color:#303030;letter-spacing:-0.1px;-webkit-text-stroke:0.3px #303030;'>2017/09/16</div>
<div class=t style='left:484px;top:470.82px;font-size:10.8px;color:#303030;letter-spacing:-0.1px;-webkit-text-stroke:0.3px #303030;'>2017/09/22</div>
<div class=t style='left:599.3px;top:470.82px;font-size:10.8px;color:#303030;letter-spacing:-0.25px;-webkit-text-stroke:0.3px #303030;'>8.00</div>
<div class=t style='left:656.5px;top:470.82px;font-size:10.8px;color:#303030;letter-spacing:-0.25px;-webkit-text-stroke:0.3px #303030;'>0.00</div>
<div class=t style='left:712.6px;top:470.82px;font-size:10.8px;color:#303030;letter-spacing:-0.25px;-webkit-text-stroke:0.3px #303030;'>0.00</div>
<div class=t style='left:825.5px;top:470.82px;font-size:10.8px;color:#303030;letter-spacing:-0.25px;-webkit-text-stroke:0.3px #303030;'>29.00</div>
<div class=t style='left:897.5px;top:470.82px;font-size:10.8px;color:#1f1fe4;letter-spacing:-0.1px;-webkit-text-stroke:0.3px #1f1fe4;'>Print</div>
<div class=t style='left:942.2px;top:470.82px;font-size:10.8px;color:#1f1fe4;letter-spacing:-0.35px;-webkit-text-stroke:0.3px #1f1fe4;'>Edit</div>
<div class=t style='right:65.20000000000005px;top:470.82px;font-size:10.8px;color:#303030;letter-spacing:-0.25px;-webkit-text-stroke:0.3px #303030;'>29.00</div>
<div style='position:absolute;left:234.3px;top:489.4px;width:808.70px;height:23.60px;background:#eaf5fd;border-left:1px solid #d6dde2;box-sizing:border-box'></div>
<div style='position:absolute;left:234.3px;top:512px;width:808.70px;height:1.00px;background:#d0d3d5'></div>
<svg style='position:absolute;left:243.2px;top:493.40px' width='12' height='13' viewBox='0 0 12 13'><path d='M0 0 L11.4 6.25 L0 12.5Z' fill='#222'/></svg>
<div style='position:absolute;left:264.4px;top:495.80px;width:11px;height:11.8px;border:1px solid #c8c8c8;border-radius:2px;background:#fff;box-sizing:border-box'></div>
<div class=t style='left:286.2px;top:497.12px;font-size:10.8px;color:#303030;letter-spacing:0.01px;-webkit-text-stroke:0.3px #303030;'>Tobert, Abigail</div>
<div class=t style='left:396.7px;top:494.42px;font-size:10.8px;color:#303030;letter-spacing:-0.1px;-webkit-text-stroke:0.3px #303030;'>2017/09/16</div>
<div class=t style='left:484px;top:494.42px;font-size:10.8px;color:#303030;letter-spacing:-0.1px;-webkit-text-stroke:0.3px #303030;'>2017/09/22</div>
<div class=t style='left:599.3px;top:494.42px;font-size:10.8px;color:#303030;letter-spacing:-0.25px;-webkit-text-stroke:0.3px #303030;'>0.00</div>
<div class=t style='left:656.5px;top:494.42px;font-size:10.8px;color:#303030;letter-spacing:-0.25px;-webkit-text-stroke:0.3px #303030;'>0.00</div>
<div class=t style='left:712.6px;top:494.42px;font-size:10.8px;color:#303030;letter-spacing:-0.25px;-webkit-text-stroke:0.3px #303030;'>0.00</div>
<div class=t style='left:825.5px;top:494.42px;font-size:10.8px;color:#303030;letter-spacing:-0.25px;-webkit-text-stroke:0.3px #303030;'>79.75</div>
<div class=t style='left:897.5px;top:494.42px;font-size:10.8px;color:#1f1fe4;letter-spacing:-0.1px;-webkit-text-stroke:0.3px #1f1fe4;'>Print</div>
<div class=t style='left:942.2px;top:494.42px;font-size:10.8px;color:#1f1fe4;letter-spacing:-0.35px;-webkit-text-stroke:0.3px #1f1fe4;'>Edit</div>
<div class=t style='right:65.20000000000005px;top:494.42px;font-size:10.8px;color:#303030;letter-spacing:-0.25px;-webkit-text-stroke:0.3px #303030;'>79.75</div>
<div style='position:absolute;left:234.3px;top:513.0px;width:808.70px;height:22.50px;background:#eaf5fd;border-left:1px solid #d6dde2;box-sizing:border-box'></div>
<svg style='position:absolute;left:243.2px;top:517.00px' width='12' height='13' viewBox='0 0 12 13'><path d='M0 0 L11.4 6.25 L0 12.5Z' fill='#222'/></svg>
<div style='position:absolute;left:264.4px;top:519.40px;width:11px;height:11.8px;border:1px solid #c8c8c8;border-radius:2px;background:#fff;box-sizing:border-box'></div>
<div class=t style='left:286.2px;top:520.72px;font-size:10.8px;color:#303030;letter-spacing:-0.13px;-webkit-text-stroke:0.3px #303030;'>Tobert, Jonathan</div>
<div class=t style='left:396.7px;top:518.02px;font-size:10.8px;color:#303030;letter-spacing:-0.1px;-webkit-text-stroke:0.3px #303030;'>2017/09/16</div>
<div class=t style='left:484px;top:518.02px;font-size:10.8px;color:#303030;letter-spacing:-0.1px;-webkit-text-stroke:0.3px #303030;'>2017/09/22</div>
<div class=t style='left:599.3px;top:518.02px;font-size:10.8px;color:#303030;letter-spacing:-0.25px;-webkit-text-stroke:0.3px #303030;'>0.00</div>
<div class=t style='left:656.5px;top:518.02px;font-size:10.8px;color:#303030;letter-spacing:-0.25px;-webkit-text-stroke:0.3px #303030;'>0.00</div>
<div class=t style='left:712.6px;top:518.02px;font-size:10.8px;color:#303030;letter-spacing:-0.25px;-webkit-text-stroke:0.3px #303030;'>0.00</div>
<div class=t style='left:825.5px;top:518.02px;font-size:10.8px;color:#303030;letter-spacing:-0.25px;-webkit-text-stroke:0.3px #303030;'>2.00</div>
<div class=t style='left:897.5px;top:518.02px;font-size:10.8px;color:#1f1fe4;letter-spacing:-0.1px;-webkit-text-stroke:0.3px #1f1fe4;'>Print</div>
<div class=t style='left:942.2px;top:518.02px;font-size:10.8px;color:#1f1fe4;letter-spacing:-0.35px;-webkit-text-stroke:0.3px #1f1fe4;'>Edit</div>
<div class=t style='right:65.20000000000005px;top:518.02px;font-size:10.8px;color:#303030;letter-spacing:-0.25px;-webkit-text-stroke:0.3px #303030;'>2.00</div>
<div style='position:absolute;left:1041.8px;top:247.3px;width:1.20px;height:288.20px;background:#d0d0d0'></div>
</div></body></html>
